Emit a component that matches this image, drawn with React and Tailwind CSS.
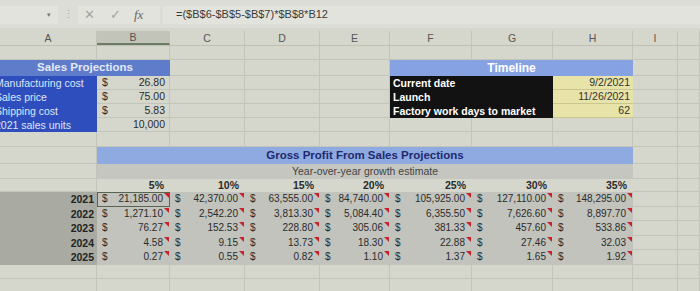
import { Fragment } from "react";

const COLS = "grid grid-cols-[97px_73px_75px_75px_70px_82px_81px_80px_45px_1fr]";
const LINE = "border-r border-b border-[#c3c5bb]";

const growth = [
    ["2021", ["21,185.00", "42,370.00", "63,555.00", "84,740.00", "105,925.00", "127,110.00", "148,295.00"]],
    ["2022", ["1,271.10", "2,542.20", "3,813.30", "5,084.40", "6,355.50", "7,626.60", "8,897.70"]],
    ["2023", ["76.27", "152.53", "228.80", "305.06", "381.33", "457.60", "533.86"]],
    ["2024", ["4.58", "9.15", "13.73", "18.30", "22.88", "27.46", "32.03"]],
    ["2025", ["0.27", "0.55", "0.82", "1.10", "1.37", "1.65", "1.92"]],
];

const rates = ["5%", "10%", "15%", "20%", "25%", "30%", "35%"];

function Blank({ n = 1 }) {
    return Array.from({ length: n }).map((_, i) => <div key={i} className={LINE} />);
}

function Flag() {
    return (
        <span className="absolute right-[1px] top-[1px] h-0 w-0 border-l-[5px] border-t-[5px] border-l-transparent border-t-[#c8232c]" />
    );
}

function Money({ value, active }) {
    return (
        <div
            className={`relative flex h-full items-center justify-between pl-[5px] pr-[7px] ${
                active ? "outline outline-[1.5px] -outline-offset-1 outline-[#56654f]" : ""
            }`}
        >
            <span>$</span>
            <span>{value}</span>
            <Flag />
        </div>
    );
}

function EmptyRow({ h = "h-[14px]" }) {
    return (
        <div className={`${COLS} ${h}`}>
            <Blank n={10} />
        </div>
    );
}

export default function App() {
    return (
        <div
            className="h-[291px] w-[700px] overflow-hidden bg-[#d5d7cd] text-[10.5px] leading-none text-[#2b2b2b]"
            style={{ fontFamily: '"Liberation Sans", Arial, sans-serif' }}
        >
            {/* formula bar */}
            <div className="flex h-[28px] items-center bg-[#dcddd6] pt-[1px]">
                <div className="flex h-[18px] w-[58px] items-center justify-end bg-[#e2e3dd] pr-[7px] text-[7px] text-[#777]">
                    ▾
                </div>
                <div className="w-[20px] text-center text-[11px] text-[#aaa]">⋮</div>
                <div className="flex h-[18px] w-[82px] items-center bg-[#e2e3dd] text-[#a5a6a0]">
                    <span className="w-[26px] pl-[6px] text-[13px]">✕</span>
                    <span className="w-[30px] pl-[6px] text-[13px]">✓</span>
                    <span
                        className="text-[13px] italic text-[#666]"
                        style={{ fontFamily: '"Liberation Serif", serif' }}
                    >
                        fx
                    </span>
                </div>
                <div className="ml-[3px] flex h-[18px] flex-1 items-center bg-[#e2e3dd] pl-[13px] text-[11px] text-[#3a3a3a]">
                    =($B$6-$B$5-$B$7)*$B$8*B12
                </div>
            </div>

            {/* column headers */}
            <div className={`${COLS} mt-[3px] h-[15px] border-b border-[#bfc1b7] text-[10.5px] text-[#555]`}>
                {["A", "B", "C", "D", "E", "F", "G", "H", "I", ""].map((c, i) => (
                    <div
                        key={i}
                        className={`flex items-center justify-center border-r border-[#c3c5bb] ${
                            c === "B" ? "border-b-2 border-b-[#6d7d63] bg-[#c2c4ba]" : ""
                        }`}
                    >
                        {c}
                    </div>
                ))}
            </div>

            <EmptyRow />

            {/* section headers */}
            <div className={`${COLS} h-[16px]`}>
                <div className="col-span-2 flex items-center justify-center bg-[#5f7ccb] text-[11.5px] font-bold text-[#e4e9f6]">
                    Sales Projections
                </div>
                <Blank n={3} />
                <div className="col-span-3 flex items-center justify-center bg-[#86a2e2] text-[12px] font-bold text-white">
                    Timeline
                </div>
                <Blank n={2} />
            </div>

            {[
                ["Manufacturing cost", "$", "26.80", "Current date", "9/2/2021"],
                ["Sales price", "$", "75.00", "Launch", "11/26/2021"],
                ["Shipping cost", "$", "5.83", "Factory work days to market", "62"],
                ["2021 sales units", "", "10,000", null, null],
            ].map(([label, cur, val, tl, tv]) => (
                <div key={label} className={`${COLS} h-[14px]`}>
                    <div className="flex items-center overflow-hidden bg-[#2e4ebd] text-[#dfe5f7]">
                        <span className="-ml-[5px] whitespace-nowrap">{label}</span>
                    </div>
                    <div className={`flex items-center justify-between pl-[5px] pr-[4px] ${LINE}`}>
                        <span>{cur}</span>
                        <span>{val}</span>
                    </div>
                    <Blank n={3} />
                    {tl ? (
                        <Fragment>
                            <div className="col-span-2 flex items-center bg-[#121212] pl-[3px] font-bold text-white">
                                {tl}
                            </div>
                            <div className="flex items-center justify-end border-b border-[#cbc690] bg-[#e8e3a8] pr-[3px] text-[#333]">
                                {tv}
                            </div>
                        </Fragment>
                    ) : (
                        <Blank n={3} />
                    )}
                    <Blank n={2} />
                </div>
            ))}

            <EmptyRow h="h-[15px]" />

            {/* gross profit */}
            <div className={`${COLS} h-[17px]`}>
                <Blank />
                <div className="col-span-7 flex items-center justify-center bg-[#8fa9e1] text-[11.5px] font-bold text-[#1e2a6e]">
                    Gross Profit From Sales Projections
                </div>
                <Blank n={2} />
            </div>
            <div className={`${COLS} h-[15px]`}>
                <Blank />
                <div className="col-span-7 flex items-center justify-center bg-[#c5c6c0] text-[10.5px] text-[#444]">
                    Year-over-year growth estimate
                </div>
                <Blank n={2} />
            </div>
            <div className={`${COLS} h-[13px]`}>
                <Blank />
                {rates.map((r) => (
                    <div key={r} className="flex items-center justify-end pr-[6px] font-bold">
                        {r}
                    </div>
                ))}
                <Blank n={2} />
            </div>
            {growth.map(([year, values], ri) => (
                <div key={year} className={`${COLS} h-[14.5px] text-[10px]`}>
                    <div className="flex items-center justify-end bg-[#a9aba2] pr-[3px] text-[10.5px] font-bold text-[#222]">
                        {year}
                    </div>
                    {values.map((v, ci) => (
                        <div key={ci} className="bg-[#c2c3bd]">
                            <Money value={v} active={ri === 0 && ci === 0} />
                        </div>
                    ))}
                    <Blank n={2} />
                </div>
            ))}

            <EmptyRow />
            <EmptyRow />
        </div>
    );
}
